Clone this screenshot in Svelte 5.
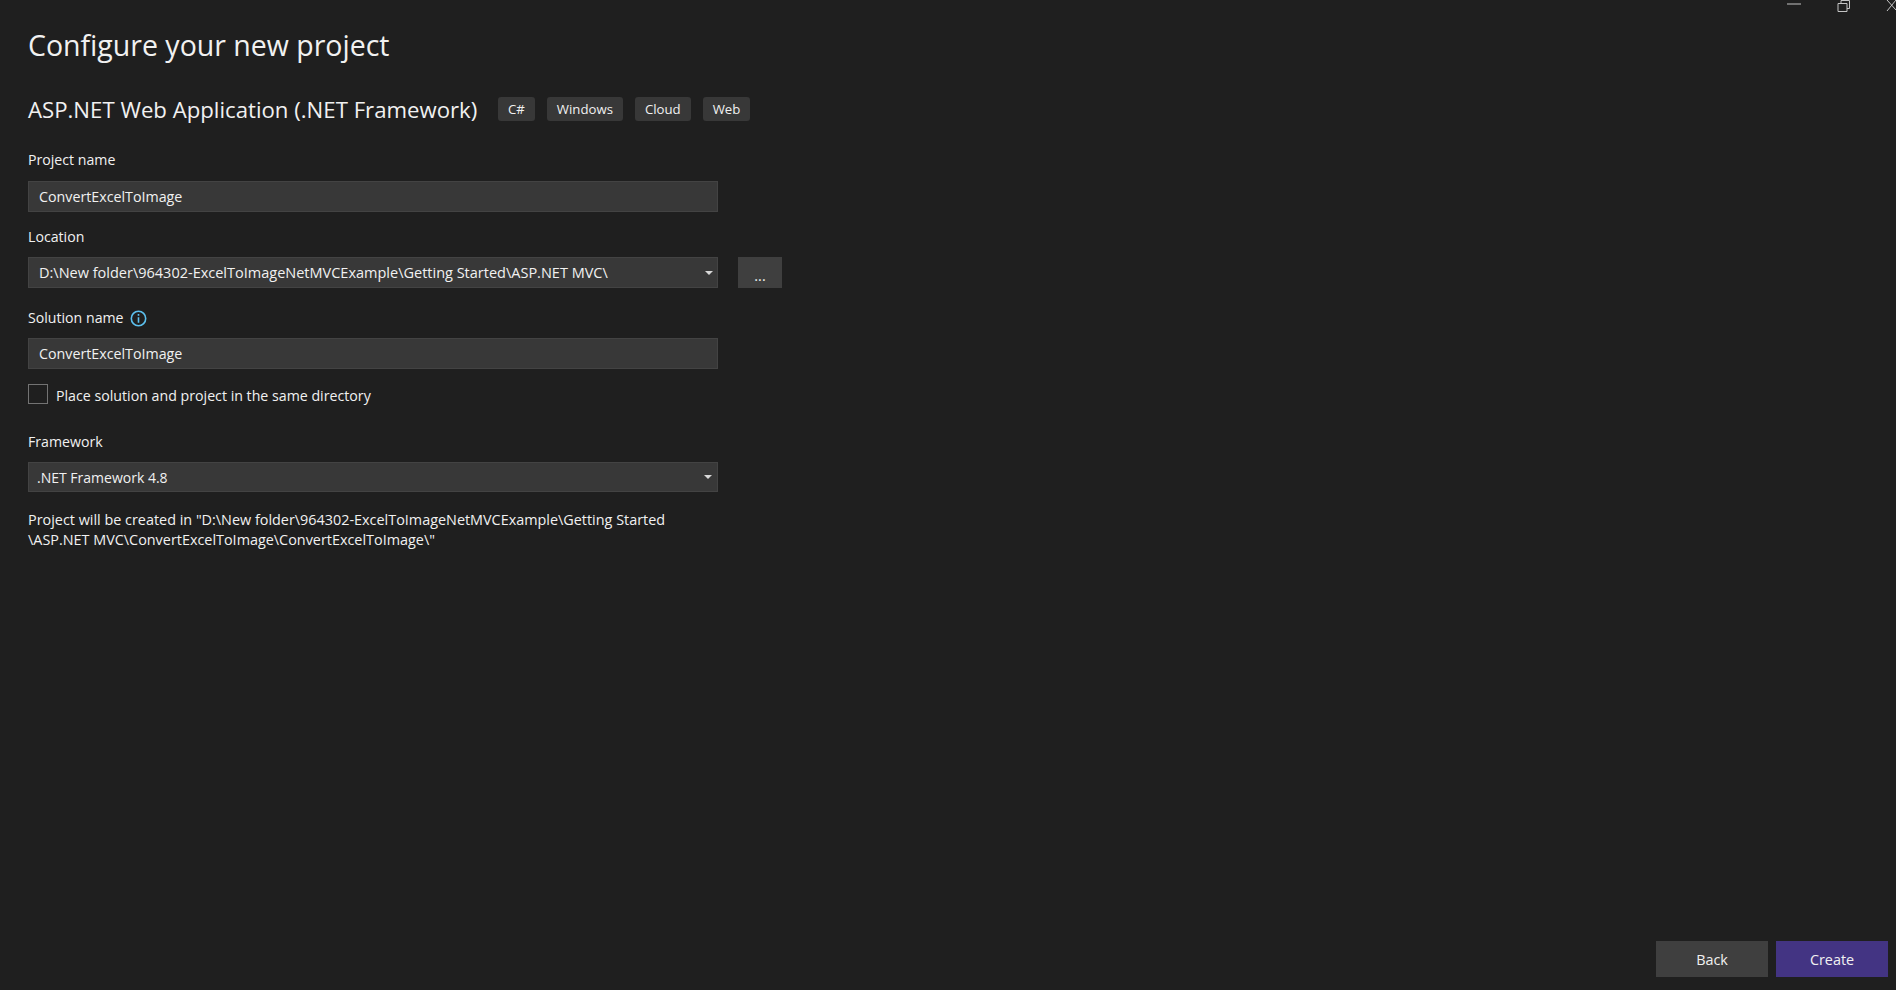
<script>
  const tags = ['C#', 'Windows', 'Cloud', 'Web']
  let project_name = 'ConvertExcelToImage'
  let location = 'D:\\New folder\\964302-ExcelToImageNetMVCExample\\Getting Started\\ASP.NET MVC\\'
  let solution_name = 'ConvertExcelToImage'
  let same_directory = false
</script>

<div class="page">
  <div class="window-controls">
    <svg class="minimize" width="14" height="2" viewBox="0 0 14 2"><path d="M0 1h14" /></svg>
    <svg class="restore" width="14" height="12" viewBox="0 0 14 12"><path d="M1 3.500h9v8h-9zM4 3.500v-3h8.500v8h-2.500" /></svg>
    <svg class="close" width="10" height="12" viewBox="0 0 10 12"><path d="M1 0l9 10M1 11l9-11" /></svg>
  </div>

  <h1>Configure your new project</h1>

  <div class="template">
    <h2>ASP.NET Web Application (.NET Framework)</h2>
    <div class="tags">
      {#each tags as tag}
        <span class="tag">{tag}</span>
      {/each}
    </div>
  </div>

  <label class="field-label first" for="project-name">Project name</label>
  <input id="project-name" class="text-input" type="text" bind:value={project_name} />

  <label class="field-label location" for="location">Location</label>
  <div class="location-row">
    <div class="combo">
      <input id="location" class="text-input long" type="text" bind:value={location} />
      <span class="arrow"></span>
    </div>
    <button class="browse" type="button">...</button>
  </div>

  <div class="field-label solution">
    <label for="solution-name">Solution name</label>
    <svg width="17" height="17" viewBox="0 0 17 17" class="info">
      <circle cx="8.500" cy="8.500" r="7.200" />
      <path d="M8.500 7.200v5.600M8.500 4v1.800" />
    </svg>
  </div>
  <input id="solution-name" class="text-input" type="text" bind:value={solution_name} />

  <label class="check-row">
    <input type="checkbox" bind:checked={same_directory} />
    <span>Place solution and project in the same directory</span>
  </label>

  <div class="field-label framework">Framework</div>
  <div class="combo framework-combo">
    <div class="select-value">.NET Framework 4.8</div>
    <span class="arrow"></span>
  </div>

  <p class="summary">Project will be created in "D:\New folder\964302-ExcelToImageNetMVCExample\Getting Started<br />\ASP.NET MVC\ConvertExcelToImage\ConvertExcelToImage\"</p>

  <div class="footer">
    <button class="action" type="button">Back</button>
    <button class="action primary" type="button">Create</button>
  </div>
</div>

<style>
  :global(body) {
    background-color: #1f1f1f;
  }

  .page {
    box-sizing: border-box;
    position: relative;
    height: 990px;
    padding: 0 8px 13px 28px;
    display: flex;
    flex-direction: column;
    align-items: flex-start;
    overflow: hidden;
    background-color: #1f1f1f;
    color: #f1f1f1;
    font-family: "Open Sans", "Noto Sans", sans-serif;
    font-size: 14.400px;
  }

  .window-controls {
    position: absolute;
    top: 0;
    right: 0;
    width: 110px;
    height: 12px;
  }

  .window-controls svg {
    position: absolute;
    fill: none;
    stroke: #c4c4c4;
    stroke-width: 1;
  }

  .minimize { left: 1px; top: 3px; }
  .restore { left: 51px; top: 0; }
  .close { left: 100px; top: 0; }

  h1 {
    margin: 24px 0 0;
    font-size: 28.500px;
    line-height: 42px;
    font-weight: 400;
  }

  .template {
    display: flex;
    align-items: center;
    margin-top: 31px;
  }

  h2 {
    margin: 0;
    font-size: 22.200px;
    line-height: 26px;
    height: 24px;
    font-weight: 400;
    width: 470px;
  }

  .tags {
    display: flex;
    gap: 12px;
  }

  .tag {
    height: 24px;
    line-height: 24px;
    padding: 0 10px;
    border-radius: 3px;
    background-color: #383838;
    font-size: 13.200px;
  }

  .field-label {
    display: flex;
    align-items: center;
    gap: 6px;
    height: 20px;
    line-height: 20px;
    margin-bottom: 10px;
    font-size: 14.150px;
  }

  .field-label.first { margin-top: 29px; margin-bottom: 11px; }
  .field-label.location { margin-top: 15px; }
  .field-label.solution { margin-top: 20px; }
  .field-label.framework { margin-top: 28px; }

  .info {
    fill: none;
    stroke: #5cc0ee;
    stroke-width: 1.600;
  }

  .text-input {
    box-sizing: border-box;
    display: block;
    width: 690px;
    height: 31px;
    padding: 0 10px;
    border: 1px solid #434343;
    border-radius: 0;
    outline: none;
    background-color: #383838;
    color: #f1f1f1;
    font: inherit;
    font-size: 14.250px;
  }

  .text-input.long {
    font-size: 14.500px;
  }

  .location-row {
    display: flex;
    gap: 20px;
  }

  .combo {
    position: relative;
    width: 690px;
  }

  .arrow {
    position: absolute;
    right: 5px;
    top: 50%;
    margin-top: -2px;
    border-left: 4px solid transparent;
    border-right: 4px solid transparent;
    border-top: 4px solid #d8d8d8;
  }

  .browse {
    width: 44px;
    height: 31px;
    padding: 6px 0 0;
    border: none;
    background-color: #3f3f3f;
    color: #f1f1f1;
    font: inherit;
  }

  .check-row {
    display: flex;
    align-items: center;
    gap: 8px;
    margin-top: 15px;
    height: 20px;
    font-size: 14.200px;
  }

  .check-row span {
    padding-top: 2px;
  }

  .check-row input {
    appearance: none;
    box-sizing: border-box;
    width: 20px;
    height: 20px;
    margin: 0;
    border: 1px solid #737373;
    background-color: transparent;
  }

  .framework-combo {
    box-sizing: border-box;
    height: 30px;
    border: 1px solid #434343;
    background-color: #383838;
  }

  .select-value {
    padding-left: 8px;
    line-height: 29px;
    font-size: 14px;
  }

  .summary {
    margin: 18px 0 0;
    line-height: 20px;
  }

  .footer {
    display: flex;
    gap: 8px;
    margin-top: auto;
    align-self: flex-end;
  }

  .action {
    width: 112px;
    height: 36px;
    padding: 0;
    border: none;
    background-color: #3f3f3f;
    color: #f1f1f1;
    font: inherit;
  }

  .primary {
    background-color: #433483;
  }
</style>
